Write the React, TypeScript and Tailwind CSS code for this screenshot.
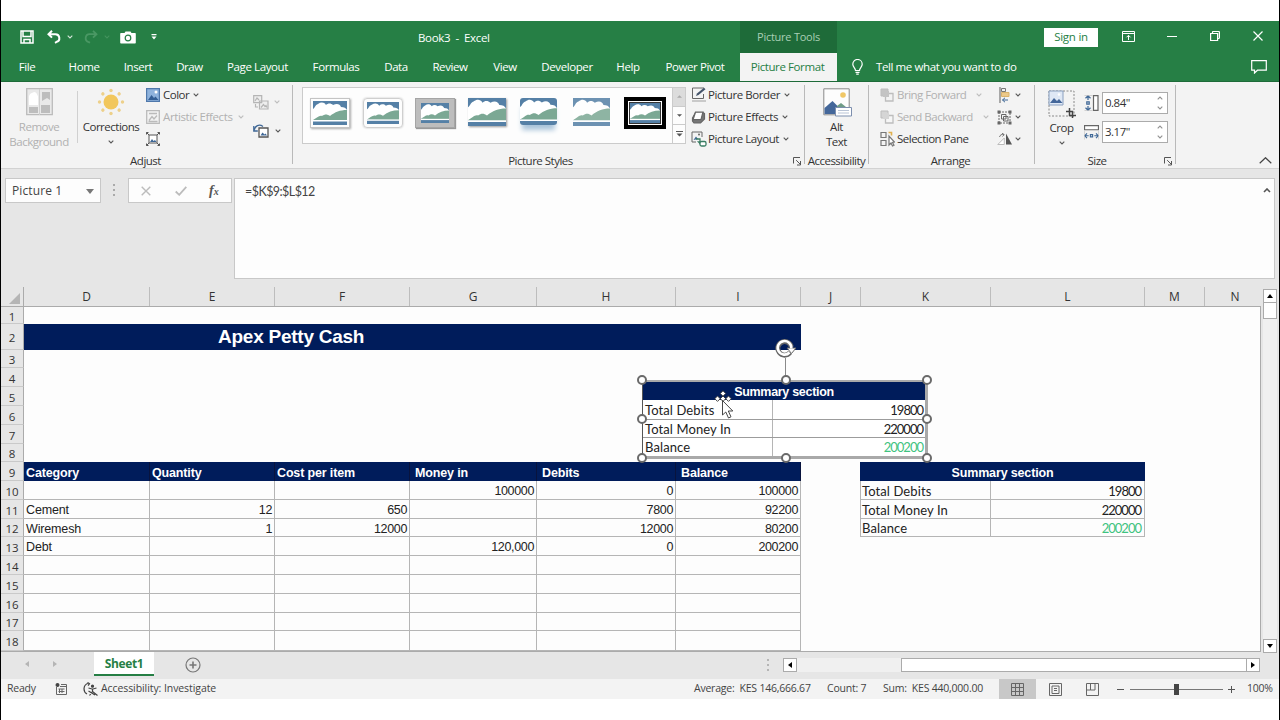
import { type ReactNode } from "react";
import clsx from "clsx";

const UI = "font-['Open_Sans','Noto_Sans',sans-serif]";
const ARIAL = "font-['Liberation_Sans',Arial,sans-serif]";
const CALIBRI = "font-['Lato','Open_Sans',sans-serif]";

const TABS = [
  { label: "File", cls: "w-[18px]" },
  { label: "Home", cls: "ml-[7px] w-[32px]" },
  { label: "Insert", cls: "-ml-px w-[28px]" },
  { label: "Draw", cls: "w-[25px]" },
  { label: "Page Layout", cls: "w-[61px]" },
  { label: "Formulas", cls: "w-[46px]" },
  { label: "Data", cls: "ml-px w-[22px]" },
  { label: "Review", cls: "w-[36px]" },
  { label: "View", cls: "w-[24px]" },
  { label: "Developer", cls: "w-[50px]" },
  { label: "Help", cls: "-ml-px w-[24px]" },
  { label: "Power Pivot", cls: "w-[60px]" },
];

const COLUMNS = [
  { name: "D", w: "w-[126px]" },
  { name: "E", w: "w-[125px]" },
  { name: "F", w: "w-[135px]" },
  { name: "G", w: "w-[127px]" },
  { name: "H", w: "w-[139px]" },
  { name: "I", w: "w-[125px]" },
  { name: "J", w: "w-[60px]" },
  { name: "K", w: "w-[130px]" },
  { name: "L", w: "w-[154px]" },
  { name: "M", w: "w-[60px]" },
  { name: "N", w: "w-[55px]" },
];

const ROW_HEIGHTS = [
  "h-[18px]", "h-[26px]", "h-[18px]", "h-[19px]", "h-[19px]", "h-[19px]",
  "h-[19px]", "h-[18px]", "h-[19px]", "h-[19px]", "h-[19px]", "h-[18px]",
  "h-[19px]", "h-[19px]", "h-[19px]", "h-[19px]", "h-[18px]", "h-[20px]",
];

const LEDGER_HEAD = ["Category", "Quantity", "Cost per item", "Money in", "Debits", "Balance"];

const LEDGER: Record<number, string[]> = {
  10: ["", "", "", "100000", "0", "100000"],
  11: ["Cement", "12", "650", "", "7800", "92200"],
  12: ["Wiremesh", "1", "12000", "", "12000", "80200"],
  13: ["Debt", "", "", "120,000", "0", "200200"],
};

const SUMMARY = [
  { label: "Total Debits", value: "19800" },
  { label: "Total Money In", value: "220000" },
  { label: "Balance", value: "200200", green: true },
];

function Chevron({ className }: { className?: string }) {
  return (
    <svg viewBox="0 0 6 4" className={clsx("h-1 w-1.5 shrink-0 opacity-80", className)} fill="none" stroke="currentColor">
      <path d="M.7.7 3 3 5.300.7" strokeWidth="1.100" />
    </svg>
  );
}

function Launcher({ className }: { className?: string }) {
  return (
    <svg viewBox="0 0 9 9" className={clsx("h-[9px] w-[9px]", className)} fill="none" stroke="#555">
      <path d="M.5 6.500V.500H7M3.200 3.200 7.500 7.500M7.500 4v4H4" />
    </svg>
  );
}

function Divider() {
  return <div className="mt-[3px] h-[79px] w-px shrink-0 bg-[#b9b9b9]" />;
}

/* ---------- title bar ---------- */

function TitleBar() {
  return (
    <div className="flex h-8 items-center text-white">
      <svg viewBox="0 0 14 14" className="ml-[19px] h-3.5 w-3.5" fill="none" stroke="currentColor" strokeWidth="1.500">
        <path d="M1 1h12v12H1zM3 1v5.500h8V1M4 13V9.500h6V13" />
      </svg>
      <svg viewBox="0 0 14 14" className="ml-[13px] h-3.5 w-3.5" fill="none" stroke="currentColor" strokeWidth="2">
        <path d="M5 .8 1.500 4.200 5 7.600M2 4.200h6.200a4 4 0 0 1 1 7.900L8 12.800" />
      </svg>
      <Chevron className="ml-[6px]" />
      <svg viewBox="0 0 14 14" className="ml-[11px] h-3.5 w-3.5 text-[#4a9864]" fill="none" stroke="currentColor" strokeWidth="1.800">
        <path d="M9 .8l3.500 3.400L9 7.600M12 4.200H5.800a4 4 0 0 0-1 7.900L6 12.800" />
      </svg>
      <Chevron className="ml-[6px] text-[#4a9864]" />
      <svg viewBox="0 0 16 13" className="ml-[10px] h-[13px] w-4">
        <path d="M1 2h3.500l1-1.500h5l1 1.500H15a.8.8 0 0 1 .8.8v9a.8.8 0 0 1-.8.8H1a.8.8 0 0 1-.8-.8v-9A.8.8 0 0 1 1 2z" fill="#fff" />
        <circle cx="8" cy="7" r="2.800" fill="none" stroke="#267f45" strokeWidth="1.200" />
      </svg>
      <svg viewBox="0 0 6 6" className="ml-[15px] h-1.5 w-1.5" fill="currentColor">
        <path d="M.5 0h5v1.200h-5zM.5 2.500h5L3 5.500z" />
      </svg>
      <span className="ml-[261px] w-[90px] pt-0.5 whitespace-pre text-[11.5px] font-medium tracking-[-0.35px]">Book3  -  Excel</span>
      <div className="ml-[232px] flex h-8 w-[97px] items-center justify-center bg-[#1e6b39] text-[11px] font-medium tracking-[-0.25px] text-[#a9cfb5]">
        Picture Tools
      </div>
      <div className="ml-[207px] flex h-[19px] w-[54px] items-center justify-center bg-white text-[11.5px] font-medium tracking-[-0.25px] text-[#267f45]">
        Sign in
      </div>
      <svg viewBox="0 0 13 11" className="ml-[24px] h-[11px] w-[13px] -translate-y-px" fill="none" stroke="currentColor">
        <path d="M.5.500h12v10H.5zM.5 2.500h12M6.500 9V4.500M4.500 6.300l2-2 2 2" />
      </svg>
      <div className="ml-[32px] h-px w-2.5 -translate-y-px bg-white" />
      <svg viewBox="0 0 10 10" className="ml-[33px] h-2.5 w-2.5 -translate-y-px" fill="none" stroke="currentColor" strokeWidth="1.200">
        <path d="M.6 2.500h7v7h-7zM2.500 2V1.300a.8.8 0 0 1 .8-.8H8.600a.8.8 0 0 1 .8.8v5.400a.8.8 0 0 1-.8.8H8" />
      </svg>
      <svg viewBox="0 0 10 10" className="ml-[33px] h-2.5 w-2.5 -translate-y-px" fill="none" stroke="currentColor" strokeWidth="1.200">
        <path d="m.5.5 9 9M9.500.5l-9 9" />
      </svg>
    </div>
  );
}

function TabStrip() {
  return (
    <div className="flex h-7 items-center text-[11.5px] font-medium tracking-[-0.4px] text-white">
      <nav className="flex w-[739px] shrink-0 gap-[25px] pl-[17px]">
        {TABS.map((t) => (
          <span key={t.label} className={clsx("flex shrink-0 justify-center whitespace-nowrap", t.cls)}>
            {t.label}
          </span>
        ))}
      </nav>
      <div className="flex h-7 w-[97px] shrink-0 items-center justify-center bg-[#f3f3f3] pr-0.5 text-[#267f45]">Picture Format</div>
      <svg viewBox="0 0 11 16" className="ml-[15px] h-4 w-[11px]" fill="none" stroke="currentColor" strokeWidth="1.200">
        <path d="M3.500 11.500C3.500 9 .8 8 .8 5.200a4.700 4.700 0 0 1 9.400 0C10.200 8 7.500 9 7.500 11.500zM3.500 13.300h4M4.200 15.200h2.600" />
      </svg>
      <span className="ml-[13px] w-[375px] whitespace-nowrap">Tell me what you want to do</span>
      <svg viewBox="0 0 16 14" className="h-3.5 w-4" fill="none" stroke="currentColor" strokeWidth="1.200">
        <path d="M.7.700h14.600v9.500H6.500L3.500 13v-2.800H.7z" />
      </svg>
    </div>
  );
}

/* ---------- ribbon ---------- */

function Landscape({ className }: { className?: string }) {
  return (
    <svg viewBox="0 0 34 24" preserveAspectRatio="none" className={className}>
      <rect width="34" height="24" fill="#5580a6" />
      <path d="M0 8c2-1 2-4 5-5 3-2 6-2 8 1 2-2 5-2 7 0 4-2 7-1 8 2 3 0 5 1 6 3v10H0z" fill="#fff" />
      <path d="M0 19c4-2 6-5 9-4 3-2 5-2 8 0 5-4 10-6 17-6v11z" fill="#7ba894" />
      <path d="M0 19h34v1.500H0z" fill="#fff" />
    </svg>
  );
}

const STYLES: { frame: string; pic: string }[] = [
  { frame: "border border-[#c4c4c4] p-[2px] shadow-[1px_1px_2px_#aaa]", pic: "h-full w-full" },
  { frame: "rounded-sm border border-[#cfcfcf] p-[3px] shadow-[0_0_2px_#bbb]", pic: "h-full w-full" },
  { frame: "border border-[#a5a5a5] bg-[#bdbdbd] px-[5px] py-1 shadow-[1px_1px_1px_#999]", pic: "h-full w-full" },
  { frame: "", pic: "h-[28px] w-[38px] shadow-[1px_1px_2px_#999]" },
  { frame: "", pic: "h-[27px] w-[37px] rounded-[3px] shadow-[0_7px_5px_-2px_#aac4da]" },
  { frame: "", pic: "h-[28px] w-[37px] opacity-85" },
  { frame: "border-[3px] border-black p-px bg-white outline-1 outline-black", pic: "h-full w-full border border-[#333]" },
];

function RibbonRow({ icon, label, dim, chev, className }: { icon: ReactNode; label?: string; dim?: boolean; chev?: string; className?: string }) {
  return (
    <div className={clsx("flex h-[22px] items-center", dim ? "text-[#b1b1b1]" : "text-[#333]", className)}>
      <span className="flex w-[17px] shrink-0">{icon}</span>
      {label && <span className="whitespace-nowrap">{label}</span>}
      {chev !== undefined && <Chevron className={chev} />}
    </div>
  );
}

function GroupLabel({ children, className }: { children: ReactNode; className?: string }) {
  return <div className={clsx("flex h-[19px] items-center justify-center text-[#333]", className)}>{children}</div>;
}

function AdjustGroup() {
  return (
    <div className="w-[291px] shrink-0">
      <div className="flex h-[69px] pt-[2px]">
        <div className="flex w-[76px] flex-col items-center pt-1 leading-[15px] text-[#b1b1b1]">
          <svg viewBox="0 0 27 28" className="mb-[3px] h-7 w-[27px]" fill="none">
            <path d="M.7.700h25.600v26H.7z" stroke="#bbb" strokeWidth="1.300" fill="#e9e9e9" />
            <path d="M3 17V8c2-4 4-3 5-4 3 0 3 3 4 4v9z" fill="#fff" />
            <path d="M16 4h8v8l-3-2-5 3zM3 19h9v6H3zM15 17h9v8h-9z" fill="#bdbdbd" />
            <path d="M13.500 1v26" stroke="#cfcfcf" />
          </svg>
          <span>Remove</span>
          <span className="whitespace-nowrap">Background</span>
        </div>
        <div className="mt-[7px] h-[52px] w-px bg-[#d0d0d0]" />
        <div className="flex w-[66px] flex-col items-center pt-1 leading-[15px] text-[#333]">
          <svg viewBox="-14 -14 28 28" className="mb-[3px] h-7 w-7">
            <circle r="7.500" fill="#f2c75c" />
            {[0, 45, 90, 135, 180, 225, 270, 315].map((a) => (
              <circle key={a} cy="-11.500" r="1.700" fill="#edd08a" transform={`rotate(${a})`} />
            ))}
          </svg>
          <span className="whitespace-nowrap">Corrections</span>
          <Chevron className="mt-1.5" />
        </div>
        <div className="ml-0.5 w-[107px]">
          <RibbonRow
            label="Color"
            chev="ml-1"
            icon={
              <svg viewBox="0 0 14 14" className="h-3.5 w-3.5">
                <path d="M.6.600h12.800v12.800H.6z" fill="#8fb3dd" stroke="#4f78ab" strokeWidth="1.200" />
                <path d="M2 12 5.500 7l2.500 3 1.500-1.500L12.500 12z" fill="#345f95" />
                <circle cx="10" cy="4" r="1.500" fill="#fff" />
              </svg>
            }
          />
          <RibbonRow
            dim
            label="Artistic Effects"
            chev="ml-[5px]"
            className="tracking-[-0.38px]"
            icon={
              <svg viewBox="0 0 14 14" className="h-3.5 w-3.5" fill="none" stroke="#bbb" strokeWidth="1.300">
                <path d="M.7.700h12.600v12.600H.7zM3 3.500h8M3 10.500l3-4 2 2.500 3-3.500M2.500 11.500h9" />
              </svg>
            }
          />
          <RibbonRow
            icon={
              <svg viewBox="0 0 14 14" className="h-3.5 w-3.5" fill="none" stroke="#555">
                <path d="M3 3h8v8H3z" fill="#fff" />
                <path d="m4 10 2-3 1.500 2L9 8l1.500 2z" fill="#3e6796" stroke="none" />
                <path d="M3 3 .5.500M11 3 13.500.500M3 11 .5 13.500M11 11l2.500 2.500M.5 2.500v-2h2M11.500.500h2v2M.5 11.500v2h2M13.500 11.500v2h-2" />
              </svg>
            }
          />
        </div>
        <div className="pt-[7px]">
          <RibbonRow
            dim
            chev="ml-1"
            icon={
              <svg viewBox="0 0 16 15" className="h-[15px] w-4" fill="none" stroke="#b5b5b5" strokeWidth="1.200">
                <path d="M.7.700h8v7h-8zM6.500 6h8.500v8H6.500z" fill="#eee" />
                <path d="m2 6 2-3 2 2M8 12.500l2.500-3 1.500 2 1-1 1 2M2.500 9v3h2.500" />
              </svg>
            }
          />
          <RibbonRow
            className="mt-[7px]"
            chev="ml-[5px]"
            icon={
              <svg viewBox="0 0 16 14" className="h-3.5 w-4" fill="none" stroke="#3e6796" strokeWidth="1.300">
                <path d="M6 4h9v9H6z" fill="#fff" stroke="#555" />
                <path d="m7.500 11.500 2-3 2 2 1-1 1.500 2z" fill="#3e6796" stroke="none" />
                <path d="M.8 2v5h4M1 6.500C2 2 6-.5 10 2.500" />
              </svg>
            }
          />
        </div>
      </div>
      <GroupLabel className="pr-0.5">Adjust</GroupLabel>
    </div>
  );
}

function StylesGroup() {
  return (
    <div className="w-[511px] shrink-0">
      <div className="flex h-[69px] pt-[2px] pl-[9px]">
        <div className="mt-[3px] flex h-[57px] w-[384px] border border-[#cbcbcb] bg-[#fdfdfd]">
          <div className="flex grow gap-[12.5px] pt-2.5 pl-[7px]">
            {STYLES.map((s, i) => (
              <div key={i} className={clsx("h-[30px] w-10 shrink-0", s.frame)}>
                <Landscape className={s.pic} />
              </div>
            ))}
          </div>
          <div className="flex w-[13px] flex-col divide-y divide-[#cbcbcb] border-l border-[#cbcbcb] text-[#555] *:flex *:flex-1 *:items-center *:justify-center">
            <div className="bg-[#dcdcdc]">
              <svg viewBox="0 0 6 3" className="h-[3px] w-[5px]"><path d="M0 3h6L3 0z" fill="#aaa" /></svg>
            </div>
            <div>
              <svg viewBox="0 0 6 3" className="h-[3px] w-[5px]"><path d="M0 0h6L3 3z" fill="currentColor" /></svg>
            </div>
            <div>
              <svg viewBox="0 0 7 6" className="h-1.5 w-[7px]"><path d="M0 0h7v1H0zM.5 2.500h6l-3 3z" fill="currentColor" /></svg>
            </div>
          </div>
        </div>
        <div className="ml-[5px] tracking-[-0.42px]">
          <RibbonRow
            label="Picture Border"
            chev="ml-[4px]"
            icon={
              <svg viewBox="0 0 16 16" className="h-4 w-4" fill="none" stroke="#666">
                <path d="M13 1H1.500v10.500h11V7" />
                <path d="m5 9 1-2.500L13 .8l1.500 1.500L7.500 8z" fill="#44546a" stroke="none" />
                <path d="M1 14h14" strokeWidth="2" stroke="#c9c9c9" />
              </svg>
            }
          />
          <RibbonRow
            label="Picture Effects"
            chev="ml-[4px]"
            icon={
              <svg viewBox="0 0 16 14" className="h-3.5 w-4" fill="none" stroke="#666" strokeWidth="1.200">
                <path d="M1.500 8 4.500 2.500h7.500l1.500 1V9l-4 4H3L1.500 11z" fill="#777" />
                <path d="m4.500 2.200 7.500-.2-2 7.500-8 .2z" fill="#fff" />
              </svg>
            }
          />
          <RibbonRow
            label="Picture Layout"
            chev="ml-[4px]"
            icon={
              <svg viewBox="0 0 16 16" className="h-4 w-4" fill="none" stroke="#666">
                <path d="M11 6V1H1v10h4" />
                <path d="M2.500 9 5 5.500 7 8z" fill="#3e6796" stroke="none" />
                <circle cx="8" cy="3.500" r="1" fill="#666" stroke="none" />
                <path d="M5 8h4v3H7.500l3.500 3.500" stroke="#3a7d63" strokeWidth="1.300" />
                <rect x="9" y="10.500" width="6" height="4.500" rx="1.500" fill="#fff" stroke="#3a7d63" strokeWidth="1.300" />
              </svg>
            }
          />
        </div>
      </div>
      <GroupLabel className="relative pr-4">
        Picture Styles
        <Launcher className="absolute top-[6px] right-[2px]" />
      </GroupLabel>
    </div>
  );
}

function AccessibilityGroup() {
  return (
    <div className="w-[63px] shrink-0 text-[#333]">
      <div className="flex h-[69px] flex-col items-center pt-[6px] leading-[15px]">
        <svg viewBox="0 0 29 29" className="mb-[2px] ml-px h-[29px] w-[29px]" fill="none">
          <path d="M.8.800h25.400v26H.8z" fill="#fdfdfd" stroke="#8a8a8a" />
          <circle cx="20" cy="7" r="2.800" fill="#f0c766" />
          <path d="M1.500 26V20l8-7 7 7v6z" fill="#44679a" />
          <path d="m14 18 4-3 5 4v2h-9z" fill="#6f9c86" />
          <path d="M12.500 19.500h16v8.500h-16z" fill="#fff" stroke="#7d8fae" />
          <path d="M15 22.500h11M15 25h11" stroke="#b9c4d6" />
        </svg>
        <span>Alt</span>
        <span>Text</span>
      </div>
      <GroupLabel>Accessibility</GroupLabel>
    </div>
  );
}

function ArrangeGroup() {
  const stack = (front: string, back: string) => (
    <svg viewBox="0 0 14 14" className="h-3.5 w-3.5" fill="none">
      <path d="M1 1h7v7H1z" fill={front} stroke="#bdbdbd" />
      <path d="M5.500 5.500h7.500v7.500H5.500z" fill={back} stroke="#bdbdbd" strokeWidth="1.300" />
      <path d="M3 3h6v6H3z" fill={front} />
    </svg>
  );
  return (
    <div className="w-[165px] shrink-0">
      <div className="flex h-[69px] pt-[2px] pl-[11px]">
        <div className="w-[117px]">
          <RibbonRow dim label="Bring Forward" chev="ml-2.5" icon={stack("#c4c4c4", "#f3f3f3")} />
          <RibbonRow dim label="Send Backward" chev="ml-2.5" icon={stack("#d5d5d5", "#f6f6f6")} />
          <RibbonRow
            label="Selection Pane"
            icon={
              <svg viewBox="0 0 15 16" className="h-4 w-[15px]" fill="none" stroke="#777" strokeWidth="1.200">
                <path d="M1 1.500h5v5H1zM1 9.500h5v5H1z" />
                <path d="M8.500 1.500h3v3" stroke="#e0b04e" strokeWidth="1.600" />
                <path d="M9 5v9l2-2 1.500 3 1.500-.8-1.500-2.700 2-.5z" fill="#fff" />
              </svg>
            }
          />
        </div>
        <div>
          <RibbonRow
            chev="ml-px"
            icon={
              <svg viewBox="0 0 15 16" className="h-4 w-[15px]" fill="none" stroke="#777">
                <path d="M3 0v16" strokeWidth="1.200" />
                <path d="M4.500 1.500h4v3h-4z" />
                <path d="M4.500 5.500H12v4H4.500z" fill="#ecc98a" stroke="#d9b36d" />
                <path d="M11 13H5.500M8 10.800 5.500 13 8 15.200" stroke="#3e6796" />
              </svg>
            }
          />
          <RibbonRow
            chev="ml-px"
            icon={
              <svg viewBox="0 0 15 15" className="h-[15px] w-[15px]" fill="none" stroke="#666">
                <path d="M2 2h11v11H2z" strokeDasharray="2 1" />
                <path d="M4.500 4.500h4.500V9H4.500zM6.500 6.500H11V11H6.500z" />
                <path d="M.5.500h3v3h-3zM11.500.500h3v3h-3zM.5 11.500h3v3h-3zM11.500 11.500h3v3h-3z" fill="#666" stroke="none" />
              </svg>
            }
          />
          <RibbonRow
            chev="ml-px"
            icon={
              <svg viewBox="0 0 15 12" className="h-3 w-[15px]" fill="none" stroke="#777">
                <path d="M.8 11.500h6.500V5z" fill="#fff" stroke="#bbb" />
                <path d="M9 11.500h6L9 .5z" fill="#555" stroke="none" />
                <path d="M2.500 4c.5-2 2-3 4.500-2.500M5 .2 7.200 1.600 5.500 3.500" />
              </svg>
            }
          />
        </div>
      </div>
      <GroupLabel className="pr-0.5">Arrange</GroupLabel>
    </div>
  );
}

function SizeInput({ value }: { value: string }) {
  return (
    <div className="ml-[3px] flex h-[22px] w-[66px] items-center border border-[#ababab] bg-white pr-1 pl-0.5 text-[#333]">
      <span className="grow">{value}</span>
      <span className="flex flex-col gap-1.5 text-[#777]">
        <Chevron className="rotate-180" />
        <Chevron />
      </span>
    </div>
  );
}

function SizeGroup() {
  return (
    <div className="w-[140px] shrink-0">
      <div className="flex h-[69px]">
        <div className="flex w-[49px] flex-col items-center pt-2 pl-1 leading-[15px] text-[#333]">
          <svg viewBox="0 0 28 28" className="mb-[2px] h-7 w-7" fill="none">
            <path d="M1 1h25v25H1z" stroke="#888" strokeDasharray="2 1.500" />
            <path d="M1 1h14v14H1z" fill="#dfe8f5" stroke="#8aa0c0" />
            <path d="m2 13 4-5 3 3 2-2 3.500 4z" fill="#44679a" />
            <circle cx="11" cy="4.500" r="1.300" fill="#fff" />
            <path d="M21.500 18v7.500H28M18 21.500h6.500V28" stroke="#444" strokeWidth="1.500" />
          </svg>
          <span>Crop</span>
          <Chevron className="mt-[6px]" />
        </div>
        <div className="flex flex-col gap-[7px] pt-[10px]">
          <div className="flex items-center">
            <svg viewBox="0 0 15 16" className="h-4 w-[15px]" fill="none" stroke="#3e6796" strokeWidth="1.200">
              <path d="M9.500.600H14v14.800H9.500z" stroke="#666" fill="#fff" />
              <path d="M4 5V.8M1.500 3.200 4 .8l2.500 2.400M4 11v4.200M1.500 12.800 4 15.200l2.500-2.400M2.800 6.800h2.400v2.400H2.800z" />
              <path d="M.5.500h8M.5 15.500h8" stroke="#bbb" strokeWidth=".6" />
            </svg>
            <SizeInput value={'0.84"'} />
          </div>
          <div className="flex items-center">
            <svg viewBox="0 0 16 16" className="h-[15px] w-[15px]" fill="none" stroke="#3e6796" strokeWidth="1.200">
              <path d="M.6.600h14.800V5H.6z" stroke="#666" fill="#fff" />
              <path d="M5 11.500H.8M3.200 9 .8 11.500 3.200 14M11 11.500h4.200M12.800 9l2.400 2.500-2.400 2.500M6.800 10.300h2.400v2.400H6.800z" />
              <path d="M.5 6.500v9M15.500 6.500v9" stroke="#bbb" strokeWidth=".6" />
            </svg>
            <SizeInput value={'3.17"'} />
          </div>
        </div>
      </div>
      <GroupLabel className="relative pr-4">
        Size
        <Launcher className="absolute top-[6px] right-[2px]" />
      </GroupLabel>
    </div>
  );
}

function Ribbon() {
  return (
    <div className="flex h-[88px] shrink-0 border-t border-b border-t-[#1e6b39] border-b-[#d2d2d2] bg-[#f3f3f3] text-[11.5px] font-medium tracking-[-0.5px]">
      <AdjustGroup />
      <Divider />
      <StylesGroup />
      <Divider />
      <AccessibilityGroup />
      <Divider />
      <ArrangeGroup />
      <Divider />
      <SizeGroup />
      <Divider />
      <svg viewBox="0 0 13 7" className="mt-[75px] ml-[83px] h-[7px] w-[13px]" fill="none" stroke="#444" strokeWidth="1.200">
        <path d="m.7 6.200 5.800-5.500 5.800 5.500" />
      </svg>
    </div>
  );
}

/* ---------- formula bar ---------- */

function Dots() {
  return (
    <div className="flex flex-col gap-[3px] *:h-0.5 *:w-0.5 *:bg-[#aaa]">
      <i />
      <i />
      <i />
    </div>
  );
}

function FormulaBar() {
  return (
    <div className="flex h-[118px] shrink-0 bg-[#e6e6e6] pt-[9px] pl-1 text-[12px] text-[#444]">
      <div className="flex h-[25px] w-[96px] items-center border border-[#c8c8c8] bg-[#fdfdfd] pt-px pr-[6px] pl-1.5">
        <span className="grow tracking-[0.1px]">Picture 1</span>
        <svg viewBox="0 0 8 5" className="h-[5px] w-2"><path d="M0 0h8L4 5z" fill="#777" /></svg>
      </div>
      <div className="mt-[6px] ml-3 w-[15px]"><Dots /></div>
      <div className="flex h-[25px] w-[104px] items-center border border-[#c8c8c8] bg-[#fdfdfd] pl-3">
        <svg viewBox="0 0 10 10" className="h-2.5 w-2.5" fill="none" stroke="#bcbcbc" strokeWidth="1.400"><path d="m.7.700 8.600 8.600M9.300.700.7 9.300" /></svg>
        <svg viewBox="0 0 12 10" className="ml-6 h-2.5 w-3" fill="none" stroke="#bcbcbc" strokeWidth="1.800"><path d="m.7 5.500 3.500 3.300L11.300.8" /></svg>
        <span className="ml-[22px] font-['Liberation_Serif',serif] text-[14px] leading-none font-bold text-[#555] italic">
          f<span className="text-[10px]">x</span>
        </span>
      </div>
      <div className="ml-[2px] flex h-[101px] w-[1041px] items-start justify-between border border-[#c8c8c8] bg-[#fdfdfd] pt-1 pr-[3px] pl-[10px]">
        <span className={clsx(CALIBRI, "text-[12.5px] tracking-[-0.55px]")}>=$K$9:$L$12</span>
        <svg viewBox="0 0 8 5" className="mt-[5px] h-[5px] w-2" fill="none" stroke="#555" strokeWidth="1.600"><path d="m1 4 3-3 3 3" /></svg>
      </div>
    </div>
  );
}

/* ---------- sheet ---------- */

function ColumnHeaders() {
  return (
    <div className="flex h-5 shrink-0 border-b border-[#ababab] bg-[#e6e6e6] text-[12px] text-[#333]">
      <div className="flex w-[23px] items-end justify-end border-r border-[#ababab] pr-[3px] pb-0.5">
        <svg viewBox="0 0 10 10" className="h-[11px] w-[11px]"><path d="M10 0v10H0z" fill="#b5b5b5" /></svg>
      </div>
      {COLUMNS.map((c) => (
        <div
          key={c.name}
          className={clsx("flex items-center justify-center border-r pt-px", c.w, c.name === "N" ? "border-transparent pl-1.5" : "border-[#bdbdbd]")}
        >
          {c.name}
        </div>
      ))}
    </div>
  );
}

function LedgerCells({ row }: { row: number }) {
  if (row < 9) return <div className="w-[777px] shrink-0" />;
  if (row === 9) {
    return (
      <>
        {LEDGER_HEAD.map((h, i) => (
          <div
            key={h}
            className={clsx(
              "flex shrink-0 items-center border-r border-[#08133d] bg-[#001c5b] pt-[3px] font-bold tracking-[-0.15px] text-white",
              COLUMNS[i].w,
              i < 3 ? "pl-[2px]" : "pl-[5px]",
            )}
          >
            {h}
          </div>
        ))}
      </>
    );
  }
  const cells = LEDGER[row] ?? ["", "", "", "", "", ""];
  return (
    <>
      {cells.map((c, i) => (
        <div
          key={i}
          className={clsx(
            "flex shrink-0 items-center border-r border-b border-[#b5b5b5] pt-[3px] text-[#222]",
            COLUMNS[i].w,
            i === 0 ? "pl-[2px] tracking-[-0.15px]" : "justify-end pr-[2px] tracking-[-0.35px]",
          )}
        >
          {c}
        </div>
      ))}
    </>
  );
}

function SummaryCells({ row }: { row: number }) {
  if (row === 9) {
    return (
      <div className={clsx(ARIAL, "flex w-[285px] items-center justify-center bg-[#001c5b] pt-[3px] font-bold tracking-[-0.15px] text-white")}>
        Summary section
      </div>
    );
  }
  const s = SUMMARY[row - 10];
  if (!s) return null;
  return (
    <div className={clsx(CALIBRI, "flex w-[285px] border-b border-l border-[#b5b5b5] text-[13px] text-[#222]")}>
      <div className="flex w-[130px] items-center border-r border-[#b5b5b5] pt-[3px] pl-px tracking-[0.1px]">{s.label}</div>
      <div className={clsx("flex grow items-center justify-end border-r border-[#b5b5b5] pt-[3px] pr-[3px] tracking-[-1px]", s.green && "text-[#3fc380]")}>
        {s.value}
      </div>
    </div>
  );
}

const HANDLES = [
  "-left-[6px] -top-[7px]", "left-[138px] -top-[7px]", "-right-[7px] -top-[7px]",
  "-left-[6px] top-[32px]", "-right-[7px] top-[32px]",
  "-left-[6px] -bottom-[7px]", "left-[138px] -bottom-[7px]", "-right-[7px] -bottom-[7px]",
];

// Linked picture floating over the cells
function LinkedPicture() {
  return (
    <div className="absolute top-[74px] left-[641px] h-[79px] w-[286px] border-t-2 border-r-[3px] border-b-[3px] border-l border-[#a9a9a9] border-l-[#555] bg-white">
      <div className={clsx(ARIAL, "flex h-[18px] items-center justify-center bg-[#001c5b] pt-0.5 text-[12.5px] font-bold tracking-[-0.3px] text-white")}>
        Summary section
      </div>
      {SUMMARY.map((s, i) => (
        <div key={s.label} className={clsx(CALIBRI, "flex text-[13px] text-[#222]", i === 2 ? "h-[18px]" : "border-b border-[#9c9c9c]", i === 0 && "h-[20px]", i === 1 && "h-[18px]")}>
          <div className="flex w-[130px] items-center border-r border-[#b5b5b5] pt-0.5 pl-[2px] tracking-[0.1px]">{s.label}</div>
          <div className={clsx("flex grow items-center justify-end pt-0.5 pr-[2px] tracking-[-1px]", s.green && "text-[#3fc380]")}>{s.value}</div>
        </div>
      ))}
      <div className="absolute -top-[24px] left-[142px] h-5 w-px bg-[#8a8a8a]" />
      {HANDLES.map((h) => (
        <i key={h} className={clsx("absolute h-[10px] w-[10px] rounded-full border-2 border-[#6a6a6a] bg-white", h)} />
      ))}
      <svg viewBox="0 0 22 22" className="absolute -top-[44px] left-[131px] h-[22px] w-[22px]" fill="none">
        <path d="M16 14.500A6.800 6.800 0 1 1 17.300 9" stroke="#666" strokeWidth="5" />
        <path d="M13 10h9l-4.500 5.500z" fill="#fff" stroke="#666" />
        <path d="M15.500 14.500A6.800 6.800 0 1 1 17.300 10.500" stroke="#fff" strokeWidth="2.600" />
      </svg>
      <svg viewBox="0 0 22 30" className="absolute top-[8px] left-[71px] h-[30px] w-[22px]" fill="#fff" stroke="#333" strokeWidth=".9">
        <path d="M9 .8 11.700 3.500 9 6.200 6.300 3.500zM3.500 6 6.200 8.700 3.500 11.400.8 8.700zM14.500 6l2.700 2.700-2.700 2.700-2.700-2.700zM9 6l2.700 2.700L9 11.400 6.300 8.700z" />
        <path d="M8.500 10.500v14.500l3.300-3 2.700 6 2.500-1.200-2.700-5.800h4.500z" />
      </svg>
    </div>
  );
}

function VScroll() {
  return (
    <div className="flex w-[17px] shrink-0 flex-col items-center pt-[2px]">
      <div className="flex h-3.5 w-3.5 items-center justify-center border border-[#ababab] bg-white">
        <svg viewBox="0 0 6 4" className="h-1 w-1.5"><path d="M0 4h6L3 0z" /></svg>
      </div>
      <div className="h-[16px] w-3.5 border border-t-0 border-[#ababab] bg-white" />
      <div className="w-3.5 grow bg-[#f0f0f0]" />
      <div className="flex h-3.5 w-3.5 items-center justify-center border border-[#ababab] bg-white">
        <svg viewBox="0 0 6 4" className="h-1 w-1.5"><path d="M0 0h6L3 4z" /></svg>
      </div>
    </div>
  );
}

function Sheet() {
  return (
    <div className="flex h-[366px] shrink-0 bg-[#e6e6e6]">
      <div className="w-[1260px] shrink-0">
        <ColumnHeaders />
        <div className={clsx(ARIAL, "relative -mt-px border-r border-b border-[#ababab] bg-[#fdfdfd] text-[12.5px]")}>
          {ROW_HEIGHTS.map((h, i) => {
            const row = i + 1;
            return (
              <div key={row} className={clsx("flex", h, row === 1 && "border-t border-[#ababab]")}>
                <div
                  className={clsx(
                    UI,
                    "flex w-[23px] shrink-0 items-center justify-center border-r border-b border-[#ababab] border-b-[#c9c9c9] bg-[#e6e6e6] pt-[3px] text-[11.5px] text-[#333]",
                  )}
                >
                  {row}
                </div>
                {row === 2 ? (
                  <div className="flex w-[777px] items-center bg-[#001c5b] pt-px pl-[194px] text-[19px] font-bold tracking-[-0.25px] text-white">
                    Apex Petty Cash
                  </div>
                ) : (
                  <LedgerCells row={row} />
                )}
                {row >= 9 && row <= 12 && (
                  <div className="ml-[59px] flex">
                    <SummaryCells row={row} />
                  </div>
                )}
              </div>
            );
          })}
          <LinkedPicture />
        </div>
      </div>
      <VScroll />
    </div>
  );
}

/* ---------- bottom bars ---------- */

function SheetTabs() {
  return (
    <div className="flex h-[26px] shrink-0 bg-[#e6e6e6]">
      <svg viewBox="0 0 32 6" className="mt-[8px] ml-6 h-1.5 w-8" fill="#b5b5b5">
        <path d="M4 0v6L0 3zM28 0v6l4-3z" />
      </svg>
      <div className="-mt-px ml-[37px] flex h-6 w-[60px] items-center justify-center border-b-2 border-[#267f45] bg-white pt-px text-[12px] font-bold tracking-[-0.35px] text-[#267f45]">
        Sheet1
      </div>
      <svg viewBox="0 0 16 16" className="mt-[4px] ml-[31px] h-4 w-4" fill="none" stroke="#777">
        <circle cx="8" cy="8" r="7" strokeWidth="1.200" />
        <path d="M8 4.500v7M4.500 8h7" strokeWidth="1.600" />
      </svg>
      <div className="mt-[6px] ml-[566px] w-[16px] opacity-80"><Dots /></div>
      <div className="mt-[5px] flex h-3.5 w-[477px]">
        <div className="flex w-3.5 items-center justify-center border border-[#ababab] bg-white">
          <svg viewBox="0 0 4 6" className="h-1.5 w-1"><path d="M4 0v6L0 3z" /></svg>
        </div>
        <div className="w-[104px] bg-[#f0f0f0]" />
        <div className="w-[345px] border border-r-0 border-[#ababab] bg-white" />
        <div className="flex w-3.5 items-center justify-center border border-[#ababab] bg-white">
          <svg viewBox="0 0 4 6" className="h-1.5 w-1"><path d="M0 0v6l4-3z" /></svg>
        </div>
      </div>
    </div>
  );
}

function StatusBar() {
  return (
    <div className="flex h-5 shrink-0 items-center bg-[#f3f3f3] text-[10.5px] font-medium tracking-[-0.22px] whitespace-pre text-[#444]">
      <span className="w-[54px] pl-1.5">Ready</span>
      <svg viewBox="0 0 12 12" className="h-3 w-3" fill="none" stroke="#666">
        <path d="M1.500 4v7.500h10V1.500H6" />
        <circle cx="2.500" cy="2" r="2" fill="#444" stroke="none" />
        <path d="M5 3.500h6M3.500 6h6M3.500 8.500h6M4.500 6v4M7 6v4" />
      </svg>
      <svg viewBox="0 0 16 14" className="ml-4 h-3.5 w-4" fill="none" stroke="#444" strokeWidth="1.200">
        <path d="M5 1.200C0 3-.2 9.500 4 12M4.500.5l2 1.200-1.400 2" />
        <circle cx="9.500" cy="4.200" r="1" fill="#444" />
        <path d="m5.500 6 3.500 1h1l3.500-1M9.500 7v2.500L6.500 13.500M9.500 9.500l5 4M5.500 9 12 13" />
      </svg>
      <span className="ml-0.5 w-[593px] tracking-[-0.08px]">Accessibility: Investigate</span>
      <span className="w-[133px]">Average:  KES 146,666.67</span>
      <span className="w-[56px]">Count: 7</span>
      <span className="w-[116px]">Sum:  KES 440,000.00</span>
      <div className="flex h-5 w-[37px] items-center justify-center bg-[#c8c8c8]">
        <svg viewBox="0 0 13 13" className="h-[13px] w-[13px]" fill="none" stroke="#666">
          <path d="M.5.500h12v12H.5zM4.500.500v12M8.500.500v12M.5 4.500h12M.5 8.500h12" />
        </svg>
      </div>
      <svg viewBox="0 0 13 13" className="ml-[13px] h-[13px] w-[13px]" fill="none" stroke="#666">
        <path d="M.5.500h12v12H.5zM3 3h7v7.500H3zM5 5.500h3M5 7.500h3" />
      </svg>
      <svg viewBox="0 0 13 13" className="ml-6 h-[13px] w-[13px]" fill="none" stroke="#666">
        <path d="M.5.500h12v12H.5zM4.500.500v6.500h4.500V.500M.5 9.500V7h4" />
      </svg>
      <div className="ml-[18px] h-px w-[7px] bg-[#555]" />
      <div className="ml-[6px] flex h-3 w-[93px] items-center bg-[linear-gradient(#777,#777)] bg-[length:100%_1px] bg-center bg-no-repeat">
        <div className="ml-[44px] h-[11px] w-[5px] bg-[#444]" />
      </div>
      <svg viewBox="0 0 7 7" className="ml-[5px] h-[7px] w-[7px]" stroke="#555"><path d="M3.500 0v7M0 3.500h7" /></svg>
      <span className="ml-3">100%</span>
    </div>
  );
}

export default function App() {
  return (
    <div className={clsx(UI, "flex h-[720px] w-[1280px] flex-col overflow-hidden border-x border-black bg-white pt-[21px]")}>
      <div className="h-[60px] shrink-0 bg-[#267f45]">
        <TitleBar />
        <TabStrip />
      </div>
      <Ribbon />
      <FormulaBar />
      <Sheet />
      <SheetTabs />
      <StatusBar />
    </div>
  );
}
